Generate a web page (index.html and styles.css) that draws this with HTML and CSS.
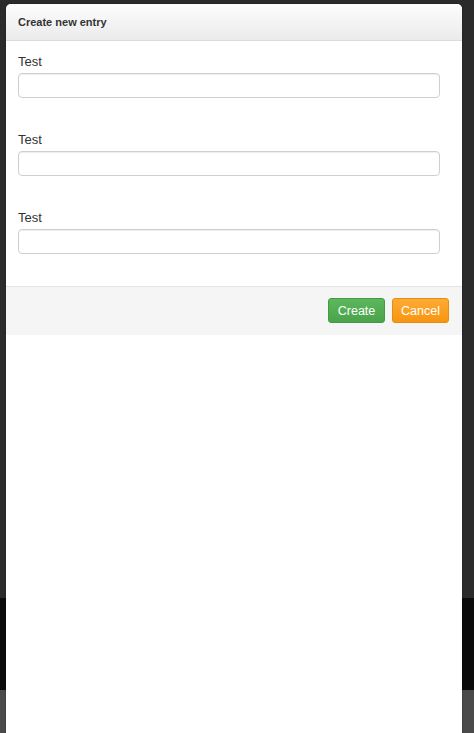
FILE: index.html
```html
<!DOCTYPE html>
<html lang="en">
<head>
  <meta charset="UTF-8" />
  <meta name="viewport" content="width=device-width, initial-scale=1" />
  <title>Create new entry</title>
  <link rel="stylesheet" href="styles.css">
</head>
<body>
  <div class="modal">
    <div class="modal-header">
      <h3>Create new entry</h3>
    </div>

    <div class="modal-body">
      <div class="field">
        <label>Test</label>
        <input type="text">
      </div>
      <div class="field">
        <label>Test</label>
        <input type="text">
      </div>
      <div class="field">
        <label>Test</label>
        <input type="text">
      </div>
    </div>

    <div class="modal-footer">
      <button class="btn btn-success">Create</button>
      <button class="btn btn-warning">Cancel</button>
    </div>
  </div>
</body>
</html>
```

FILE: styles.css
```css
body {
  margin: 0;
  height: 733px;
  overflow: hidden;
  font-family: "Liberation Sans", Arial, sans-serif;
  background: linear-gradient(#2b2b2b 0, #2b2b2b 598px, #0b0b0b 598px, #0b0b0b 690px, #4a4a4a 690px);
}

.modal {
  margin: 4px 12px 0 6px;
  height: 740px;
  background-color: #fff;
  border-radius: 5px 5px 0 0;
  box-shadow: 0 0 2px rgba(0,0,0,0.4);
}

.modal-header {
  height: 36px;
  padding: 0 12px;
  display: flex;
  align-items: center;
  border-bottom: 1px solid #dcdcdc;
  border-radius: 5px 5px 0 0;
  background: linear-gradient(#fdfdfd, #ebebeb);
}
.modal-header h3 {
  margin: 0;
  font-size: 11px;
  font-weight: bold;
  color: #333;
}

.modal-body {
  padding: 13px 22px 32px 12px;
}
.field {
  display: flex;
  flex-direction: column;
  margin-bottom: 34px;
}
.field:last-child {
  margin-bottom: 0;
}
.field label {
  font-size: 13px;
  color: #333;
  line-height: 15px;
  margin-bottom: 4px;
}
.field input {
  height: 25px;
  box-sizing: border-box;
  border: 1px solid #cfcfcf;
  border-radius: 4px;
  box-shadow: inset 0 1px 1px rgba(0,0,0,0.07);
  margin: 0;
  padding: 0 6px;
}

.modal-footer {
  height: 49px;
  box-sizing: border-box;
  padding: 11px 13px 0 0;
  background-color: #f5f5f5;
  border-top: 1px solid #e3e3e3;
  display: flex;
  justify-content: flex-end;
  align-items: flex-start;
  gap: 7px;
}

.btn {
  width: 57px;
  height: 25px;
  font-family: "Liberation Sans", Arial, sans-serif;
  font-size: 12.5px;
  color: white;
  border-radius: 3px;
  padding: 0;
  cursor: pointer;
}
.btn-success {
  background: linear-gradient(#5cb85c, #4aa34a);
  border: 1px solid #449944;
}
.btn-warning {
  background: linear-gradient(#fcab35, #f8950f);
  border: 1px solid #e88c10;
}
```
